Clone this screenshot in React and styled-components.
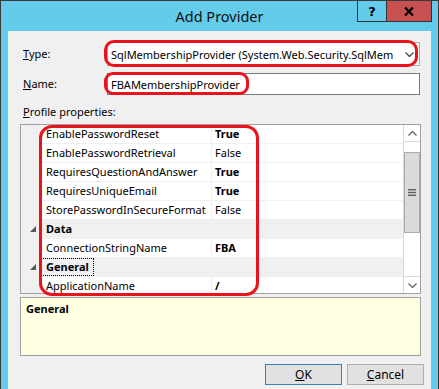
import styled, { createGlobalStyle } from "styled-components";

const GlobalStyle = createGlobalStyle`
  html, body {
    margin: 0;
    padding: 0;
    background: #ffffff;
  }
  body {
    font-family: "Noto Sans", "Open Sans", Arial, sans-serif;
    font-size: 11px;
    color: #000;
  }
`;

const properties = [
  { name: "EnablePasswordReset", value: "True", bold: true },
  { name: "EnablePasswordRetrieval", value: "False" },
  { name: "RequiresQuestionAndAnswer", value: "True", bold: true },
  { name: "RequiresUniqueEmail", value: "True", bold: true },
  { name: "StorePasswordInSecureFormat", value: "False" },
  { category: "Data" },
  { name: "ConnectionStringName", value: "FBA", bold: true },
  { category: "General", focused: true },
  { name: "ApplicationName", value: "/", bold: true },
];

const App = () => (
  <>
    <GlobalStyle />
    <Frame>
      <TitleBar>
        <Title>Add Provider</Title>
        <CaptionButtons>
          <CaptionButton $width={30} $bg="#64CBEA">?</CaptionButton>
          <CaptionButton $width={46} $bg="#C75050">
            <CloseIcon />
          </CaptionButton>
        </CaptionButtons>
      </TitleBar>

      <Client>
        <FieldGrid>
          <Label>
            <u>T</u>ype:
          </Label>
          <Select>
            <SelectText>SqlMembershipProvider (System.Web.Security.SqlMem</SelectText>
            <Chevron down dark />
          </Select>
          <Label>
            <u>N</u>ame:
          </Label>
          <TextBox>FBAMembershipProvider</TextBox>
        </FieldGrid>

        <SectionLabel>
          <u>P</u>rofile properties:
        </SectionLabel>

        <PropertyGrid>
          <Rows>
            {properties.map((p, i) =>
              p.category ? (
                <Row key={i} $category>
                  <Gutter>
                    <Expander />
                  </Gutter>
                  <CategoryName $focused={p.focused}>{p.category}</CategoryName>
                </Row>
              ) : (
                <Row key={i}>
                  <Gutter />
                  <NameCell>{p.name}</NameCell>
                  <ValueCell $bold={p.bold}>{p.value}</ValueCell>
                </Row>
              )
            )}
          </Rows>
          <ScrollBar>
            <ScrollButton>
              <Chevron />
            </ScrollButton>
            <Track>
              <Thumb>
                <Grip />
              </Thumb>
            </Track>
            <ScrollButton $bottom>
              <Chevron down />
            </ScrollButton>
          </ScrollBar>
        </PropertyGrid>

        <Description>
          <DescTitle>General</DescTitle>
        </Description>

        <ButtonRow>
          <Button $primary>
            <u>O</u>K
          </Button>
          <Button>
            <u>C</u>ancel
          </Button>
        </ButtonRow>

        <Highlight $left={96} $top={9} $width={314} $height={27} $radius={10} />
        <Highlight $left={96} $top={41} $width={145} $height={23} $radius={9} />
        <Highlight $left={31} $top={94} $width={220} $height={171} $radius={13} />
      </Client>
    </Frame>
  </>
);

const CloseIcon = () => (
  <svg width="10" height="9" viewBox="0 0 10 9">
    <path d="M1 0.5 L9 8.5 M9 0.5 L1 8.5" stroke="#000" strokeWidth="2.2" />
  </svg>
);

const Chevron = ({ down, dark }) => (
  <svg width="9" height="5" viewBox="0 0 9 5">
    <path
      d={down ? "M0.5 0.5 L4.5 4.5 L8.5 0.5" : "M0.5 4.5 L4.5 0.5 L8.5 4.5"}
      fill="none"
      stroke={dark ? "#404040" : "#606060"}
      strokeWidth="1.2"
    />
  </svg>
);

const Expander = () => (
  <svg width="6" height="6" viewBox="0 0 6 6">
    <polygon points="6,0 6,6 0,6" fill="#595959" />
  </svg>
);

const Grip = () => (
  <svg width="8" height="7" viewBox="0 0 8 7">
    <rect x="0" y="0" width="8" height="1.4" fill="#606060" />
    <rect x="0" y="2.8" width="8" height="1.4" fill="#606060" />
    <rect x="0" y="5.6" width="8" height="1.4" fill="#606060" />
  </svg>
);

const Frame = styled.div`
  width: 439px;
  height: 389px;
  box-sizing: border-box;
  background: #64cbea;
  border: 1px solid #3b3b3b;
  border-bottom: none;
  display: flex;
  flex-direction: column;
  overflow: hidden;
`;

const TitleBar = styled.div`
  height: 30px;
  flex: none;
  display: grid;
  grid-template-columns: 1fr auto 1fr;
  align-items: start;
`;

const Title = styled.div`
  grid-column: 2;
  font-size: 14.5px;
  line-height: 30px;
  color: #111;
`;

const CaptionButtons = styled.div`
  grid-column: 3;
  justify-self: end;
  display: flex;
  margin: -1px 6px 0 0;
`;

const CaptionButton = styled.div`
  width: ${(p) => p.$width}px;
  height: 22px;
  box-sizing: border-box;
  border: 1px solid #333;
  background: ${(p) => p.$bg};
  display: flex;
  align-items: center;
  justify-content: center;
  font-family: "DejaVu Sans", sans-serif;
  font-weight: bold;
  font-size: 13px;
  color: #000;

  & + & {
    margin-left: -1px;
  }
`;

const Client = styled.div`
  flex: 1;
  margin: 0 7px;
  background: #f0f0f0;
  position: relative;
  display: flex;
  flex-direction: column;
  padding-top: 11px;
`;

const FieldGrid = styled.div`
  display: grid;
  grid-template-columns: 84px minmax(0, 1fr);
  row-gap: 7px;
  align-items: center;
  padding: 0 11px 0 15px;
`;

const Label = styled.div`
  line-height: 16px;
`;

const Select = styled.div`
  height: 24px;
  min-width: 0;
  box-sizing: border-box;
  border: 1px solid #acacac;
  background: #fff;
  display: flex;
  align-items: center;
  padding: 0 5px 0 3px;
  gap: 4px;
`;

const SelectText = styled.div`
  flex: 1;
  min-width: 0;
  white-space: nowrap;
`;

const TextBox = styled.div`
  height: 22px;
  box-sizing: border-box;
  border: 1px solid #7a7a7a;
  background: #fff;
  display: flex;
  align-items: center;
  padding: 0 3px;
  white-space: nowrap;
`;

const SectionLabel = styled.div`
  margin: 9px 0 4px 15px;
  line-height: 16px;
`;

const PropertyGrid = styled.div`
  margin: 0 10px 0 12px;
  height: 170px;
  box-sizing: border-box;
  border: 1px solid #a0a0a0;
  background: #fff;
  display: flex;
  flex: none;
`;

const Rows = styled.div`
  flex: 1;
  overflow: hidden;
`;

const Row = styled.div`
  display: grid;
  grid-template-columns: 20px 170px 1fr;
  height: 19px;
  box-sizing: border-box;
  border-bottom: 1px solid #f0f0f0;
  background: ${(p) => (p.$category ? "#f0f0f0" : "#fff")};
  line-height: 18px;
`;

const Gutter = styled.div`
  background: #f0f0f0;
  display: flex;
  align-items: center;
  justify-content: flex-end;
  padding-right: 5px;
`;

const NameCell = styled.div`
  padding-left: 5px;
  white-space: nowrap;
  overflow: hidden;
`;

const ValueCell = styled.div`
  border-left: 1px solid #f0f0f0;
  padding-left: 3px;
  font-weight: ${(p) => (p.$bold ? "bold" : "normal")};
  white-space: nowrap;
`;

const CategoryName = styled.div`
  grid-column: 2 / 4;
  justify-self: start;
  font-weight: bold;
  padding: 0 4px;
  margin: 0 0 0 1px;
  line-height: 16px;
  align-self: center;
  outline: ${(p) => (p.$focused ? "1px dotted #000" : "none")};
`;

const ScrollBar = styled.div`
  width: 17px;
  flex: none;
  display: flex;
  flex-direction: column;
  background: #fff;
  border-left: 1px solid #dadada;
  box-sizing: border-box;
`;

const ScrollButton = styled.div`
  height: 17px;
  flex: none;
  display: flex;
  align-items: center;
  justify-content: center;
  border-${(p) => (p.$bottom ? "top" : "bottom")}: 1px solid #dadada;
  box-sizing: border-box;
`;

const Track = styled.div`
  flex: 1;
  padding-top: 10px;
`;

const Thumb = styled.div`
  height: 81px;
  box-sizing: border-box;
  background: #dadada;
  border: 1px solid #acacac;
  display: flex;
  align-items: center;
  justify-content: center;
`;

const Description = styled.div`
  margin: 3px 10px 0 12px;
  height: 59px;
  box-sizing: border-box;
  border: 1px solid #a0a0a0;
  background: #ffffe1;
  padding: 3px 5px;
  flex: none;
`;

const DescTitle = styled.div`
  font-weight: bold;
  line-height: 16px;
`;

const ButtonRow = styled.div`
  display: flex;
  justify-content: flex-end;
  gap: 5px;
  padding: 8px 7px 0 0;
`;

const Button = styled.div`
  width: 77px;
  height: 21px;
  box-sizing: border-box;
  border: 1px solid ${(p) => (p.$primary ? "#3c7fb1" : "#adadad")};
  background: #e1e1e1;
  display: flex;
  align-items: center;
  justify-content: center;
  font-size: 12px;
`;

const Highlight = styled.div`
  position: absolute;
  left: ${(p) => p.$left}px;
  top: ${(p) => p.$top}px;
  width: ${(p) => p.$width}px;
  height: ${(p) => p.$height}px;
  box-sizing: border-box;
  border: 3px solid #e8131b;
  border-radius: ${(p) => p.$radius}px;
  pointer-events: none;
`;

export default App;
